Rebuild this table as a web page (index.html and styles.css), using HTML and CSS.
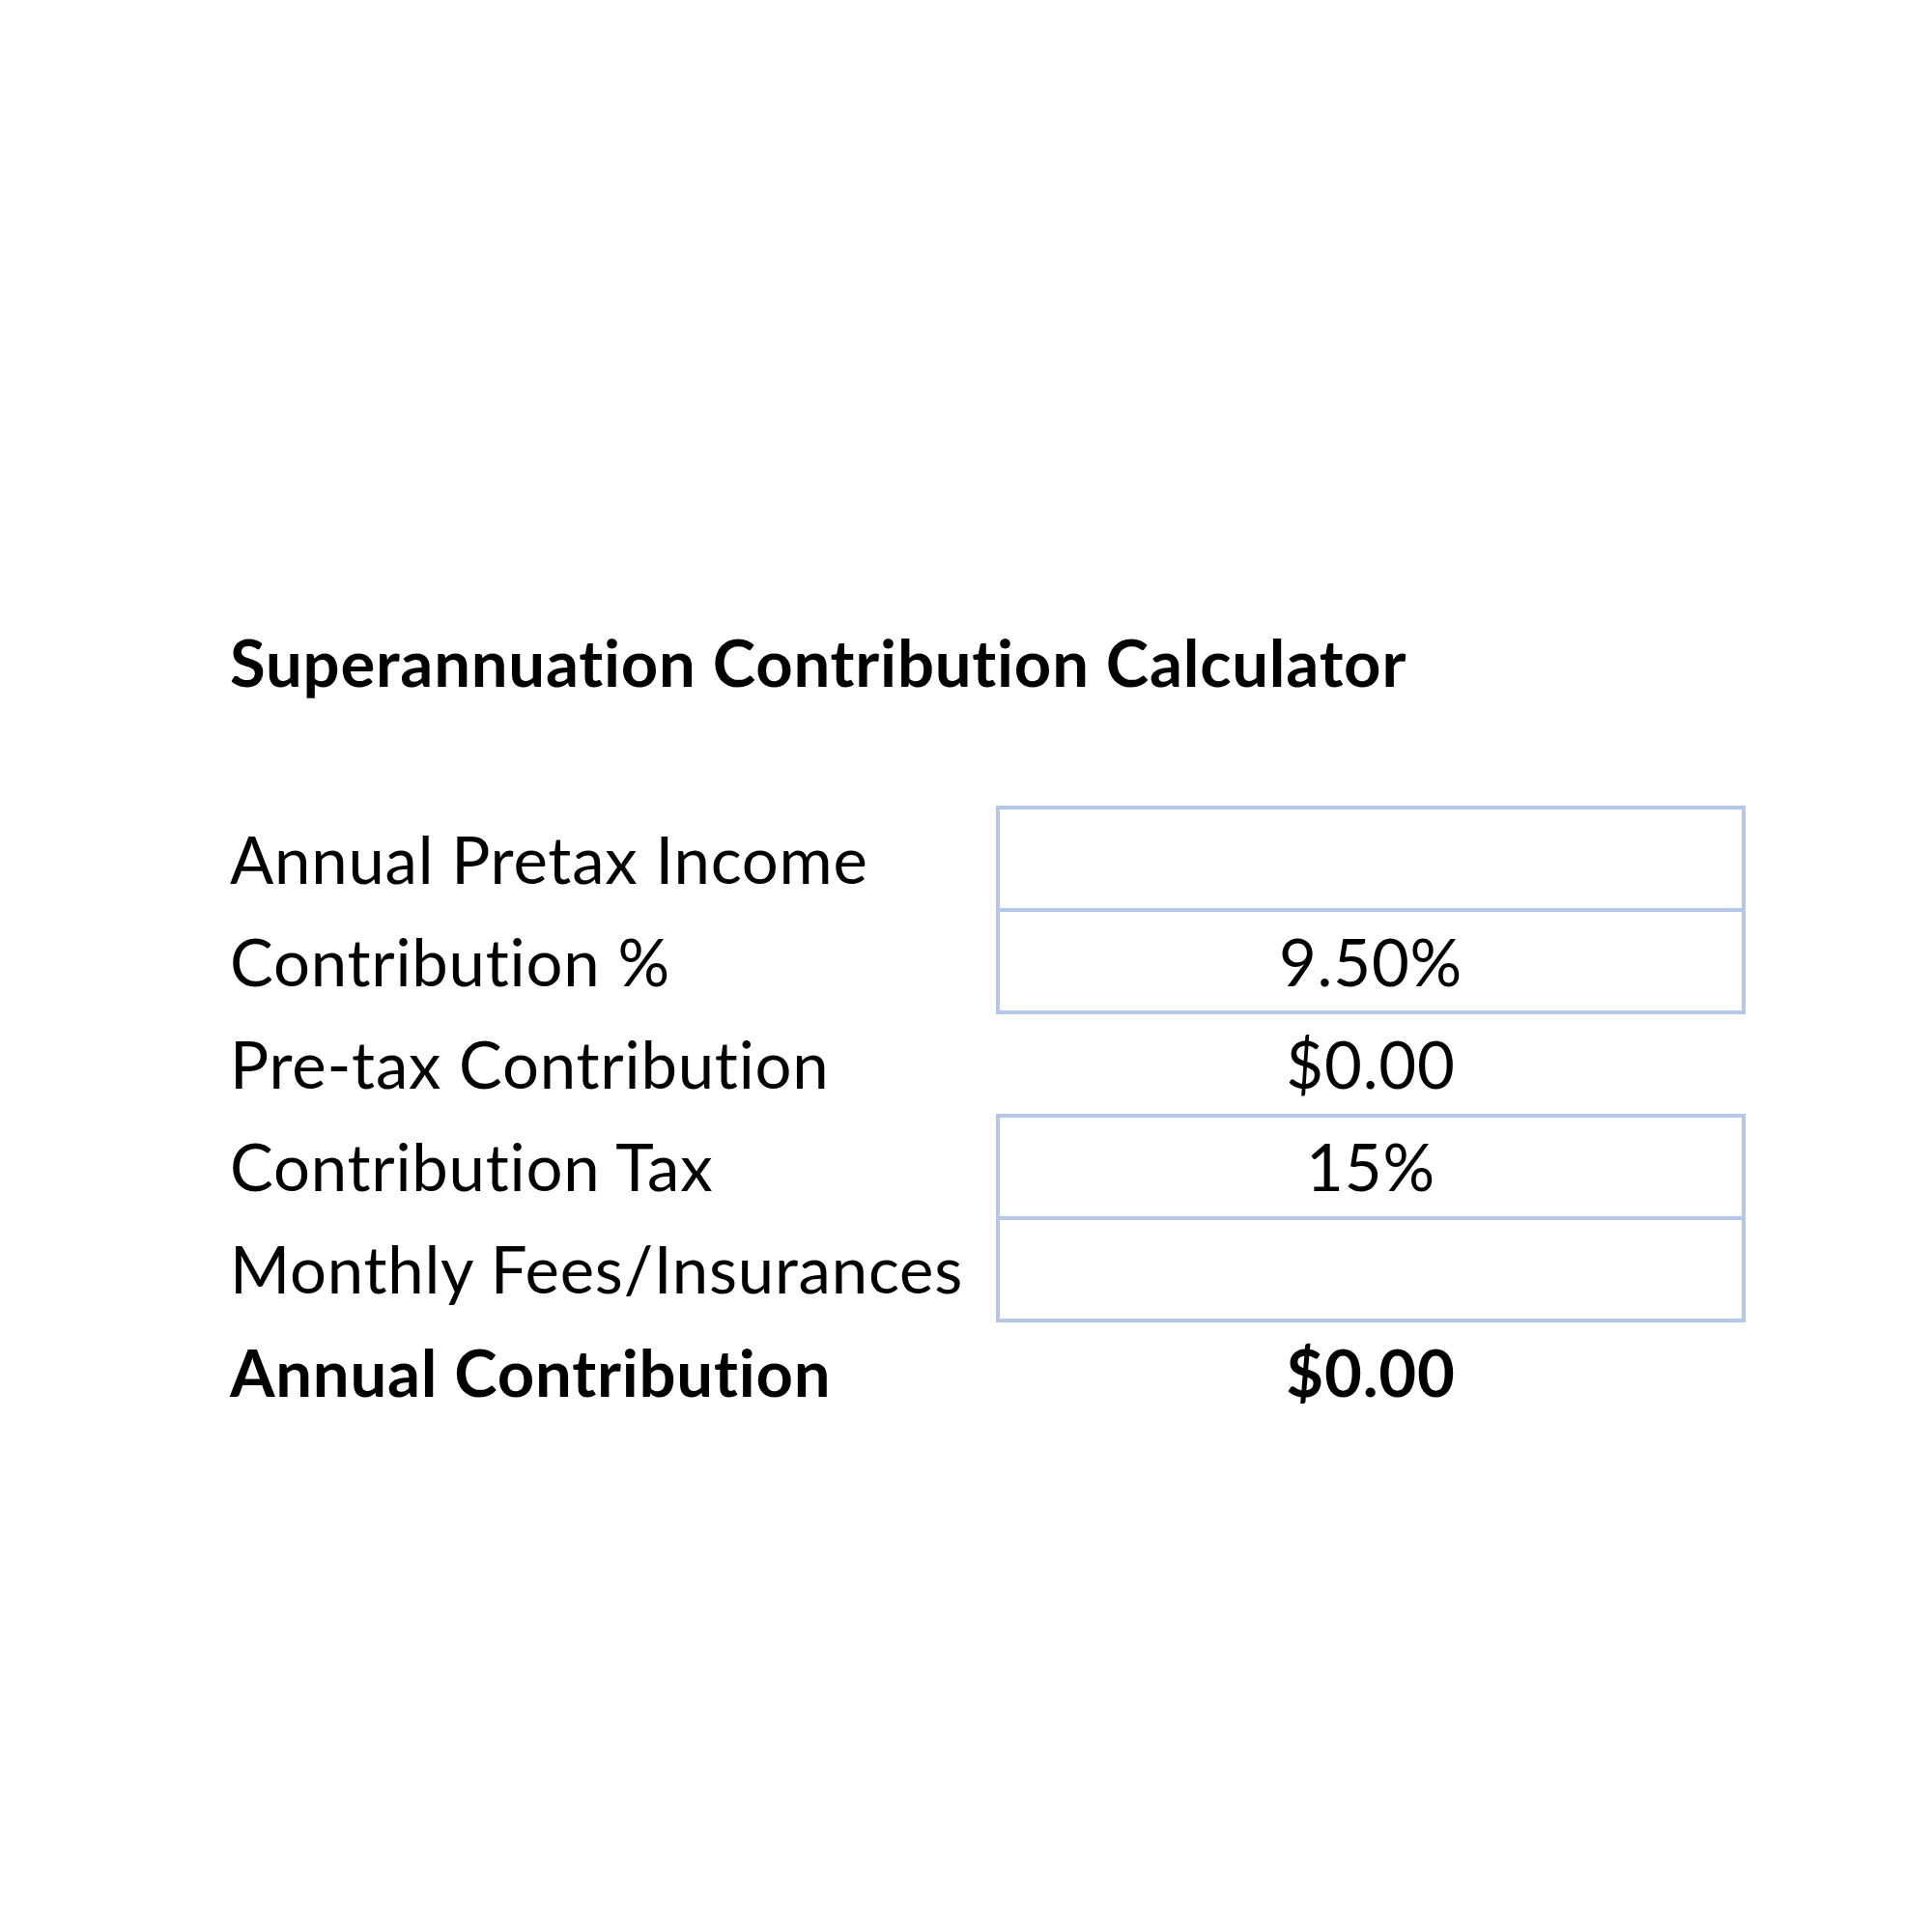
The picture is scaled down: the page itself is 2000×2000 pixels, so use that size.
FILE: index.html
```html
<!DOCTYPE html>
<html lang="en">
<head>
<meta charset="utf-8">
<title>Superannuation Contribution Calculator</title>
<link rel="stylesheet" href="styles.css">
</head>
<body>
<main class="page">
  <h1 class="title">Superannuation Contribution Calculator</h1>
  <div class="calc">
    <div class="label">Annual Pretax Income</div>
    <div class="val boxed"></div>
    <div class="label">Contribution %</div>
    <div class="val boxed">9.50%</div>
    <div class="label">Pre-tax Contribution</div>
    <div class="val">$0.00</div>
    <div class="label">Contribution Tax</div>
    <div class="val boxed">15%</div>
    <div class="label">Monthly Fees/Insurances</div>
    <div class="val boxed"></div>
    <div class="label total">Annual Contribution</div>
    <div class="val total">$0.00</div>
  </div>
</main>
</body>
</html>
```
FILE: styles.css
```css
html, body {
  margin: 0;
  padding: 0;
  background: #ffffff;
}

.page {
  width: 2000px;
  height: 2000px;
  box-sizing: border-box;
  padding: 640px 0 0 238px;
  font-family: "Lato", "Open Sans", sans-serif;
  font-variant-ligatures: none;
  letter-spacing: 0.8px;
  color: #000000;
}

.title {
  margin: 0 0 106px 0;
  font-size: 67px;
  font-weight: 700;
  line-height: 90px;
}

.calc {
  display: grid;
  grid-template-columns: 795px 772px;
  grid-auto-rows: 106.2px;
  font-size: 67px;
}

.label,
.val {
  display: flex;
  align-items: center;
  line-height: 1;
}

.val {
  justify-content: center;
  box-sizing: border-box;
}

/* borders sit centred on the grid lines, like spreadsheet cell borders */
.val.boxed {
  margin: -2px;
  border: 4px solid #b4c7e7;
}

.total {
  font-weight: 700;
}
```
